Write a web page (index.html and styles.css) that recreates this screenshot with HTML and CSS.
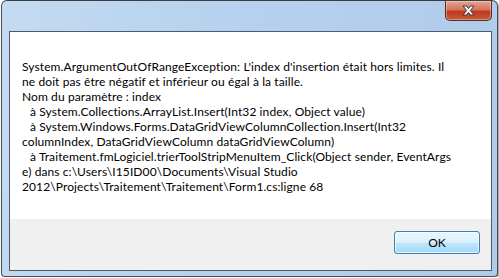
FILE: index.html
```html
<!DOCTYPE html>
<html>
<head>
    <meta charset="UTF-8">
    <title>Erreur</title>
    <link rel="stylesheet" href="styles.css">
</head>
<body>
    <div class="window">
        <!-- close button sits over the glass frame -->
        <button class="close-btn" title="Fermer">
            <svg width="13" height="11" viewBox="0 0 13 11">
                <path d="M1 1 H4.5 L6.5 3.6 L8.5 1 H12 L8.3 5.5 L12 10 H8.5 L6.5 7.4 L4.5 10 H1 L4.7 5.5 Z" fill="#fff" stroke="#3a3a3a" stroke-width="1" stroke-linejoin="round"/>
            </svg>
        </button>

        <div class="client">
            <div class="message">
                <div class="line">System.ArgumentOutOfRangeException: L'index d'insertion était hors limites. Il</div>
                <div class="line">ne doit pas être négatif et inférieur ou égal à la taille.</div>
                <div class="line">Nom du paramètre : index</div>
                <div class="line indent">à System.Collections.ArrayList.Insert(Int32 index, Object value)</div>
                <div class="line indent">à System.Windows.Forms.DataGridViewColumnCollection.Insert(Int32</div>
                <div class="line">columnIndex, DataGridViewColumn dataGridViewColumn)</div>
                <div class="line indent">à Traitement.fmLogiciel.trierToolStripMenuItem_Click(Object sender, EventArgs</div>
                <div class="line">e) dans c:\Users\I15ID00\Documents\Visual Studio</div>
                <div class="line">2012\Projects\Traitement\Traitement\Form1.cs:ligne 68</div>
            </div>
            <div class="footer">
                <button class="ok-btn">OK</button>
            </div>
        </div>
    </div>
</body>
</html>
```

FILE: styles.css
```css
body {
    margin: 0;
    background-color: #ffffff;
    font-family: "Lato", "Liberation Sans", sans-serif;
}

.window {
    position: relative;
    box-sizing: border-box;
    width: 497px;
    height: 277px;
    margin-left: 1px;
    padding: 30px 5px 5px 7px;
    border: 1px solid #4b4f55;
    border-top-color: #3a3d42;
    border-radius: 6px 6px 4px 4px;
    background: linear-gradient(100deg, #c4dbf1 0%, #b7d2ee 40%, #aecbea 100%);
    box-shadow: 1px 1px 2px rgba(0,0,0,0.45);
}

.close-btn {
    position: absolute;
    top: 0;
    right: 5px;
    width: 47px;
    height: 20px;
    padding: 0;
    border: 1px solid #5b2b24;
    border-top: none;
    border-radius: 0 0 5px 5px;
    background: linear-gradient(to bottom, #e8a493 0%, #d6735e 45%, #c0391f 55%, #c75a3d 100%);
    box-shadow: inset 0 0 0 1px rgba(255,255,255,0.35);
    display: flex;
    align-items: center;
    justify-content: center;
    cursor: pointer;
}

.client {
    box-sizing: border-box;
    height: 240px;
    border: 1px solid #4f5b68;
    background-color: #ffffff;
    display: flex;
    flex-direction: column;
}

.message {
    flex: 1;
    padding: 27px 0 0 12px;
    font-size: 12px;
    line-height: 15px;
    letter-spacing: 0.1px;
    color: #000;
}

.line {
    white-space: nowrap;
}

.indent {
    padding-left: 8px;
}

.footer {
    height: 51px;
    box-sizing: border-box;
    background-color: #f0f0f0;
    display: flex;
    justify-content: flex-end;
    align-items: flex-start;
    padding: 12px 11px 0 0;
}

.ok-btn {
    width: 86px;
    height: 23px;
    border: 1px solid #3c7fb1;
    border-radius: 3px;
    background: linear-gradient(to bottom, #eaf6fd 0%, #d9f0fc 50%, #bee6fd 51%, #a7d9f5 100%);
    box-shadow: inset 0 0 0 1px rgba(255,255,255,0.7);
    font-family: "Lato", "Liberation Sans", sans-serif;
    font-size: 12px;
    color: #000;
    padding: 0;
}
```
